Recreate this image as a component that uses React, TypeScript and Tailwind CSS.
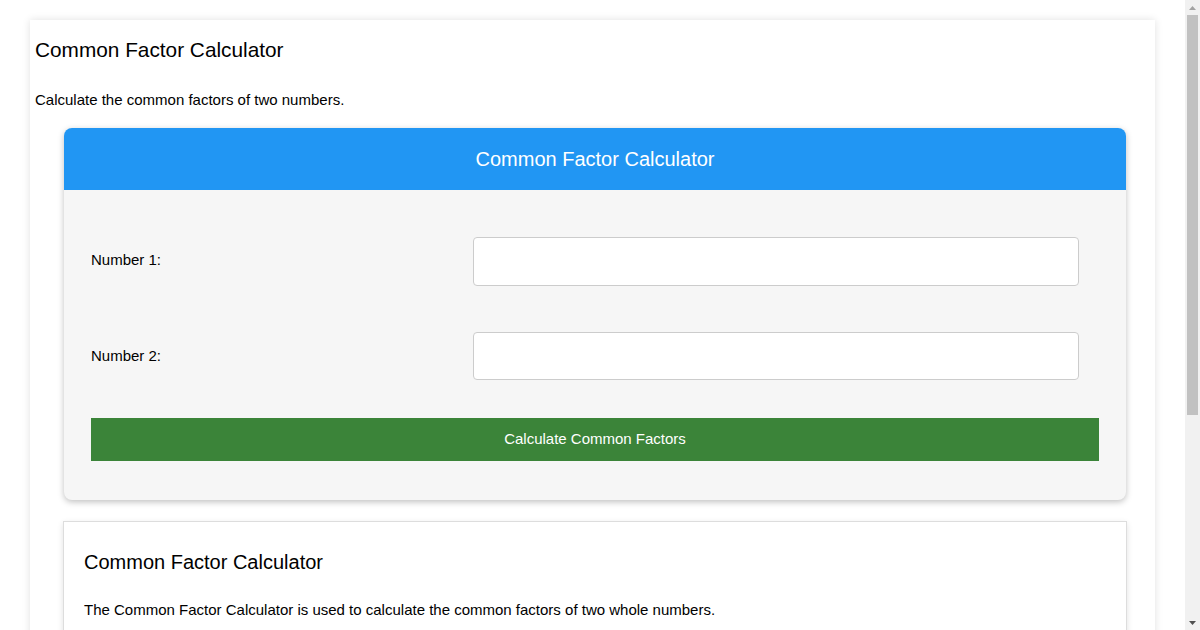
import React from "react";

function Scrollbar() {
  return (
    <div className="w-[15px] h-[630px] bg-[#f1f1f1] flex flex-col items-center shrink-0">
      <div className="h-[15px] w-full flex items-center justify-center">
        <svg width="7" height="4" viewBox="0 0 7 4">
          <polygon points="0,4 3.5,0 7,4" fill="#a3a3a3" />
        </svg>
      </div>
      <div className="w-[11px] h-[400px] bg-[#c1c1c1]" />
      <div className="flex-1" />
      <div className="h-[15px] w-full flex items-center justify-center">
        <svg width="7" height="4" viewBox="0 0 7 4">
          <polygon points="0,0 7,0 3.5,4" fill="#505050" />
        </svg>
      </div>
    </div>
  );
}

export default function App() {
  return (
    <div className="h-[630px] flex overflow-hidden bg-white text-black" style={{ fontFamily: '"Liberation Sans", Arial, sans-serif' }}>
      <div className="flex-1 overflow-hidden">
        <div className="pt-[20px] pb-[20px] px-[30px]">
          <div className="bg-white shadow-[0_0_8px_rgba(0,0,0,0.12)] pt-[18px] pb-[20px] pl-[5px] pr-[5px]">
            <h1 className="text-[20.8px] leading-[24px] m-0 font-normal">Common Factor Calculator</h1>
            <p className="text-[15px] leading-[18px] mt-[29px]">Calculate the common factors of two numbers.</p>

            <div className="ml-[29px] w-[1062px] mt-[19px] rounded-[8px] overflow-hidden bg-[#f6f6f6] shadow-[0_2px_6px_rgba(0,0,0,0.25)]">
              <div className="h-[62px] bg-[#2196f3] flex items-center justify-center">
                <span className="text-white text-[20px] leading-[24px]">Common Factor Calculator</span>
              </div>
              <div className="px-[27px] pt-[47px] pb-[39px]">
                <div className="flex items-center">
                  <label className="w-[382px] text-[15px] leading-[18px] -mt-[3px]">Number 1:</label>
                  <input type="text" className="w-[606px] h-[49px] bg-white border border-[#cccccc] rounded-[4px] outline-none" />
                </div>
                <div className="flex items-center mt-[46px]">
                  <label className="w-[382px] text-[15px] leading-[18px] -mt-[1px]">Number 2:</label>
                  <input type="text" className="w-[606px] h-[48px] bg-white border border-[#cccccc] rounded-[4px] outline-none" />
                </div>
                <button className="mt-[38px] w-full h-[43px] bg-[#3b8439] text-white text-[15px] leading-[18px] flex items-center justify-center pb-[2px]">
                  Calculate Common Factors
                </button>
              </div>
            </div>

            <div className="ml-[28px] w-[1064px] min-h-[300px] mt-[21px] bg-white border border-[#dddddd] shadow-[0_2px_6px_rgba(0,0,0,0.12)] px-[20px] pt-[28px] pb-[20px]">
              <h2 className="text-[20px] leading-[24px] font-normal">Common Factor Calculator</h2>
              <p className="text-[15px] leading-[18px] mt-[27px]">
                The Common Factor Calculator is used to calculate the common factors of two whole numbers.
              </p>
            </div>
          </div>
        </div>
      </div>
      <Scrollbar />
    </div>
  );
}
